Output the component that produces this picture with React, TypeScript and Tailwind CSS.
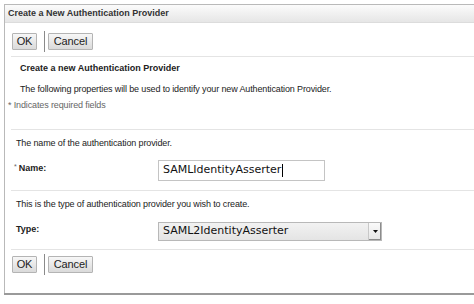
import React from "react";

const FONT = { fontFamily: '"Liberation Sans", Arial, sans-serif' };
const FIELD_FONT = { fontFamily: '"DejaVu Sans", Verdana, sans-serif' };

function Btn({ label, w }: { label: string; w: string }) {
  return (
    <button
      className={`h-[17px] ${w} rounded-[1px] border border-[#b4b4b4] bg-gradient-to-b from-[#f7f7f7] to-[#dadada] text-[11px] leading-none text-[#222]`}
    >
      {label}
    </button>
  );
}

function ButtonBar() {
  return (
    <div className="ml-[7px] flex h-[17px] items-center">
      <Btn label="OK" w="w-[25px]" />
      <span className="ml-[7px] mr-[3px] h-[21px] w-px shrink-0 bg-[#8a8a8a]" />
      <Btn label="Cancel" w="w-[45px]" />
    </div>
  );
}

function Rule({ mt }: { mt: string }) {
  return <div className={`${mt} ml-[6px] h-px bg-[#e4e4e4]`} />;
}

export default function App() {
  return (
    <div className="h-[304px] w-[474px] overflow-hidden bg-white pl-[4px] pt-[4px] text-[#222]" style={FONT}>
      <div className="h-[289px] border-l border-t border-[#b9b9b9] shadow-[0_2px_0_#9a9a9a]">
        {/* title bar */}
        <div className="flex h-[18px] items-center border-b border-[#dcdcdc] bg-gradient-to-b from-[#fbfbfb] to-[#e6e6e6] pl-[3px] text-[9px] font-bold text-[#333]">
          Create a New Authentication Provider
        </div>

        <div className="pt-[10px] tracking-[-0.13px]">
          <ButtonBar />
          <Rule mt="mt-[6px]" />

          <div className="ml-[15px] mt-[6px] text-[9px] font-bold leading-[11px] tracking-normal">
            Create a new Authentication Provider
          </div>
          <div className="ml-[15px] mt-[10px] text-[9px] leading-[11px]">
            The following properties will be used to identify your new Authentication Provider.
          </div>
          <div className="ml-[3px] mt-[5px] text-[9px] leading-[11px] text-[#666]">* Indicates required fields</div>

          <Rule mt="mt-[18px]" />

          <div className="ml-[11px] mt-[8px] text-[9px] leading-[11px]">The name of the authentication provider.</div>
          <div className="mt-[11px] flex h-[21px] items-start">
            <div className="ml-[9px] mt-[2px] w-[144px] text-[9px] font-bold tracking-normal">
              <span className="mr-[2px] align-top text-[7px] font-normal text-[#666]">*</span>
              Name:
            </div>
            <div
              className="flex h-[21px] w-[167px] items-center border border-[#c4c4c4] bg-white pl-[4px] text-[11px] tracking-normal text-[#111]"
              style={FIELD_FONT}
            >
              SAMLIdentityAsserter
              <span className="ml-px h-[13px] w-px bg-black" />
            </div>
          </div>

          <Rule mt="mt-[9px]" />

          <div className="ml-[11px] mt-[8px] text-[9px] leading-[11px]">
            This is the type of authentication provider you wish to create.
          </div>
          <div className="mt-[12px] flex h-[19px] items-start">
            <div className="ml-[11px] mt-[1px] w-[142px] text-[9px] font-bold tracking-normal">Type:</div>
            <div
              className="flex h-[19px] w-[224px] items-stretch border border-[#b8b8b8] bg-gradient-to-b from-[#f2f2f2] to-[#e4e4e4] text-[11px] tracking-normal text-[#111]"
              style={FIELD_FONT}
            >
              <div className="flex flex-1 items-center pl-[4px]">SAML2IdentityAsserter</div>
              <div className="flex w-[13px] items-center justify-center border-l border-[#c8c8c8] bg-gradient-to-b from-[#fafafa] to-[#e6e6e6] shadow-[inset_-1px_-1px_0_#8c8c8c]">
                <svg width="5" height="3" viewBox="0 0 5 3">
                  <path d="M0 0h5L2.5 3z" fill="#111" />
                </svg>
              </div>
            </div>
          </div>

          <Rule mt="mt-[8px]" />
          <div className="mt-[6px]">
            <ButtonBar />
          </div>
        </div>
      </div>
    </div>
  );
}
